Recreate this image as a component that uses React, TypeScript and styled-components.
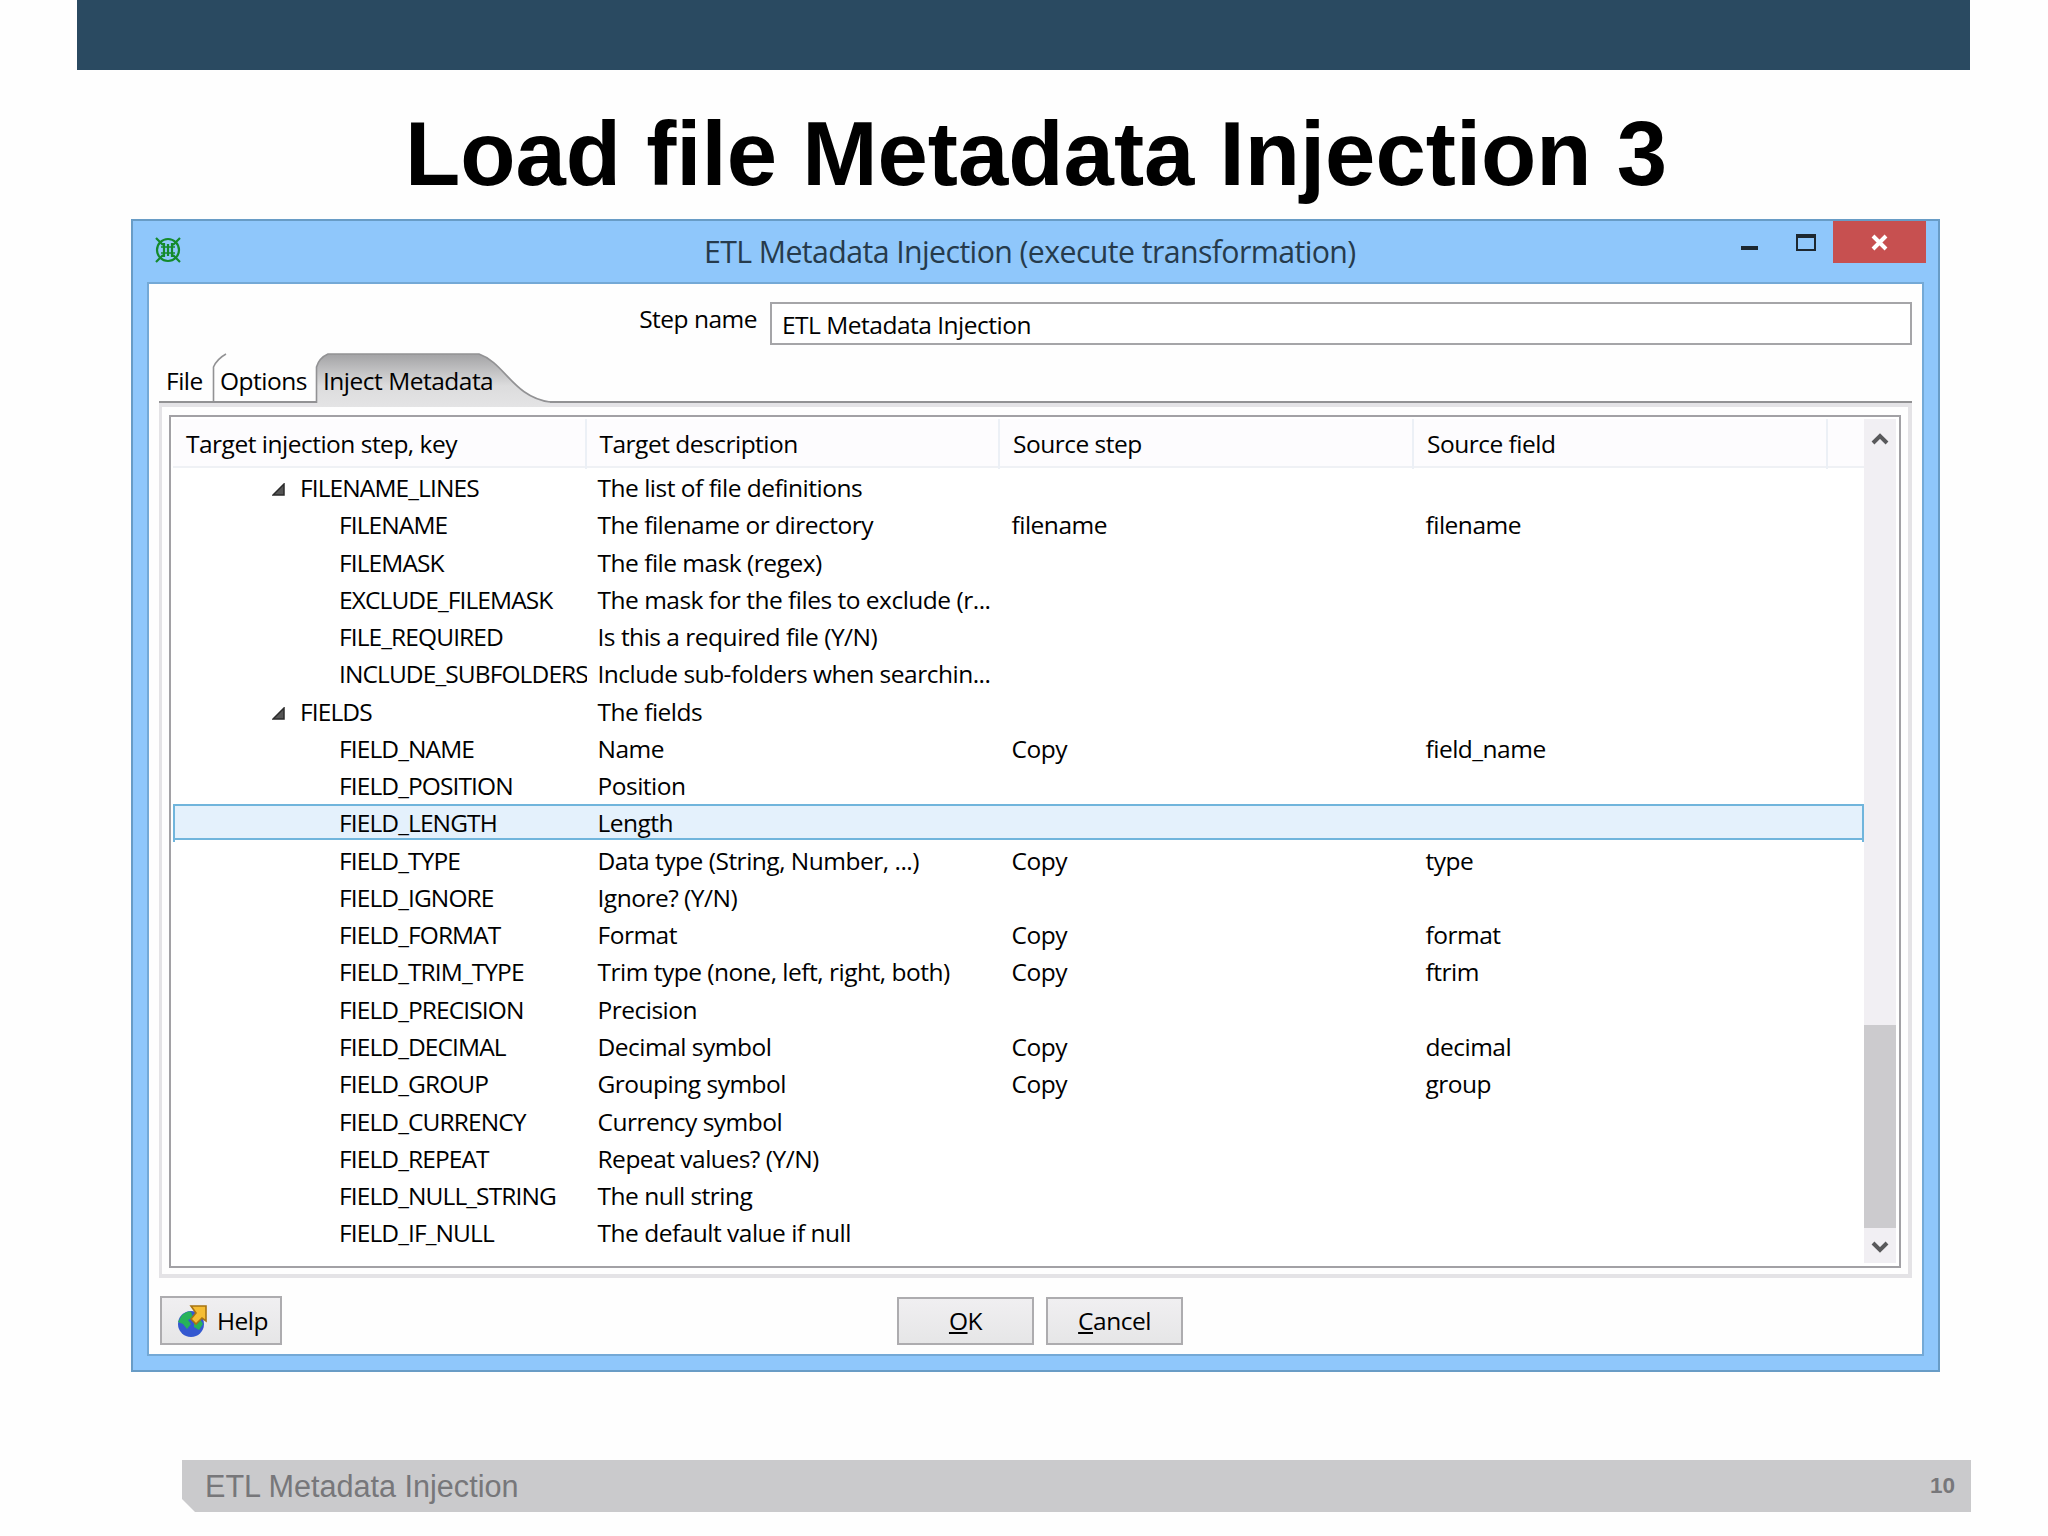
import React from 'react';
import styled, { createGlobalStyle } from 'styled-components';

const Global = createGlobalStyle`
  *, *::before, *::after { box-sizing: border-box; }
  html, body { margin: 0; padding: 0; background: #fefefe; }
  body { width: 2048px; height: 1536px; overflow: hidden; }
`;

const Slide = styled.div`
  display: flex;
  flex-direction: column;
  width: 2048px;
  height: 1536px;
  background: #fefefe;
  color: #000;
`;

const TopBand = styled.div`
  flex: none;
  height: 70px;
  margin: 0 78px 0 77px;
  background: #2a4a61;
`;

const SlideTitle = styled.h1`
  flex: none;
  height: 149px;
  margin: 0;
  padding: 33px 0 0 24px;
  font: bold 90.5px/102px "Liberation Sans", Arial, sans-serif;
  text-align: center;
  white-space: nowrap;
`;

const Window = styled.section`
  flex: none;
  display: flex;
  flex-direction: column;
  width: 1809px;
  height: 1153px;
  margin-left: 131px;
  padding: 0 14px 14px;
  border: 2px solid #689cc6;
  background: #8fc7fb;
  font: 24.5px/36px "Open Sans", "Noto Sans", sans-serif;
  white-space: nowrap;
`;

const TitleBar = styled.header`
  flex: none;
  display: flex;
  height: 61px;
  padding-left: 8px;
`;

const AppIcon = styled.svg`
  flex: none;
  width: 26px;
  height: 26px;
  margin-top: 16px;
`;

const Caption = styled.h2`
  flex: 1;
  margin: 0;
  padding-left: 523px;
  font-size: 30.3px;
  font-weight: 400;
  line-height: 61px;
  letter-spacing: -0.6px;
  color: #263b4c;
`;

const WindowControls = styled.svg`
  flex: none;
  width: 193px;
  height: 42px;
  margin-right: -2px;
`;

const Client = styled.div`
  flex: 1;
  display: flex;
  flex-direction: column;
  min-height: 0;
  padding: 18px 10px 0 10px;
  border: 2px solid #74a9d6;
  background: #fefefe;
`;

const NameRow = styled.div`
  flex: none;
  display: flex;
  justify-content: flex-end;
  gap: 13px;
  height: 51px;
`;

const NameLabel = styled.label`
  line-height: 33px;
  letter-spacing: -0.5px;
`;

const NameField = styled.div`
  width: 1142px;
  height: 43px;
  padding: 0 10px;
  border: 2px solid #a5a5a8;
  background: #fff;
  line-height: 41px;
  letter-spacing: -0.5px;
`;

const Tabs = styled.nav`
  flex: none;
  position: relative;
  display: flex;
  height: 50px;
  margin-right: 0;
`;

const TabShapes = styled.svg`
  position: absolute;
  left: 0;
  top: 0;
  width: 400px;
  height: 54px;
`;

const Tab = styled.span<{ $width: number }>`
  position: relative;
  width: ${(p) => p.$width}px;
  padding-left: 7px;
  line-height: 55px;
  letter-spacing: -0.5px;
`;

const TabPane = styled.div`
  flex: none;
  height: 875px;
  margin-right: 0;
  padding: 8px 7px 6px;
  border: solid #e4e3e6;
  border-width: 4px 4px 4px 3px;
  box-shadow: 0 -2px 0 #929294;
`;

const Tree = styled.div`
  display: flex;
  height: 853px;
  padding: 2px 3px 3px 2px;
  border: 2px solid #a2a1a5;
  background: #fff;
`;

const Grid = styled.div`
  flex: 1;
  min-width: 0;
`;

const columns = '413.5px 414px 414px 1fr';

const HeaderRow = styled.div`
  display: grid;
  grid-template-columns: 413.5px 413.5px 414px 414px 1fr;
  height: 49px;
  border-bottom: 2px solid #eff1f5;
  background: #fdfcfe;
`;

const HeaderCell = styled.div`
  padding-left: 13px;
  border-right: 2px solid #ecf0f6;
  line-height: 50px;
  letter-spacing: -0.5px;
  &:last-child { border-right: 0; }
`;

const Rows = styled.div`
  padding-top: 1px;
`;

const Row = styled.div<{ $selected?: boolean }>`
  display: grid;
  grid-template-columns: ${columns};
  height: 37.27px;
  line-height: 37px;
  ${(p) => p.$selected && `
    background: linear-gradient(#70b5dc 0 2px, #e4f1fc 2px 34px, #70b5dc 34px 36px, transparent 36px);
    box-shadow: inset 2px 0 #70b5dc, inset -2px 0 #70b5dc;
  `}
`;

const KeyCell = styled.div<{ $level: number }>`
  display: flex;
  overflow: hidden;
  padding-left: ${(p) => (p.$level === 1 ? 99 : 166)}px;
  letter-spacing: -0.9px;
`;

const Expander = styled.svg`
  flex: none;
  width: 13px;
  height: 13px;
  margin: 14px 15px 0 0;
`;

const Cell = styled.div`
  padding-left: 11px;
  letter-spacing: -0.5px;
`;

const ScrollBar = styled.div`
  flex: none;
  display: flex;
  flex-direction: column;
  justify-content: space-between;
  width: 32px;
  background: #f1eff3;
`;

const Arrow = styled.svg`
  flex: none;
  width: 32px;
  height: 35px;
`;

const Thumb = styled.div`
  height: 203px;
  margin-top: auto;
  background: #cccbce;
`;

const Buttons = styled.footer`
  flex: none;
  display: flex;
  align-items: flex-end;
  height: 67px;
  padding-left: 1px;
`;

const PushButton = styled.button<{ $width: number; $height: number; $gap: number }>`
  display: flex;
  align-items: center;
  justify-content: center;
  width: ${(p) => p.$width}px;
  height: ${(p) => p.$height}px;
  margin: 0 0 0 ${(p) => p.$gap}px;
  padding: 0;
  border: 2px solid #adacaf;
  background: linear-gradient(#f0eff1, #e6e6e7);
  color: #000;
  font: inherit;
  letter-spacing: -0.5px;
`;

const HelpIcon = styled.svg`
  width: 32px;
  height: 34px;
  margin: 0 8px 0 3px;
`;

const Mnemonic = styled.span`
  text-decoration: underline;
  text-decoration-thickness: 2px;
  text-underline-offset: 2px;
`;

const SlideFooter = styled.footer`
  flex: none;
  display: flex;
  justify-content: space-between;
  height: 52px;
  margin: 88px 77px 0 182px;
  padding: 0 16px 0 23px;
  background: #cacacc;
  clip-path: polygon(0 0, 100% 0, 100% 100%, 13px 100%, 0 39px);
  color: #77777a;
  font: 30.6px/52px "Liberation Sans", Arial, sans-serif;
`;

const PageNumber = styled.span`
  font-size: 22.5px;
  font-weight: bold;
`;

type Item = [level: number, key: string, description: string, step?: string, field?: string];

const items: Item[] = [
  [1, 'FILENAME_LINES', 'The list of file definitions'],
  [2, 'FILENAME', 'The filename or directory', 'filename', 'filename'],
  [2, 'FILEMASK', 'The file mask (regex)'],
  [2, 'EXCLUDE_FILEMASK', 'The mask for the files to exclude (r...'],
  [2, 'FILE_REQUIRED', 'Is this a required file (Y/N)'],
  [2, 'INCLUDE_SUBFOLDERS', 'Include sub-folders when searchin...'],
  [1, 'FIELDS', 'The fields'],
  [2, 'FIELD_NAME', 'Name', 'Copy', 'field_name'],
  [2, 'FIELD_POSITION', 'Position'],
  [2, 'FIELD_LENGTH', 'Length'],
  [2, 'FIELD_TYPE', 'Data type (String, Number, ...)', 'Copy', 'type'],
  [2, 'FIELD_IGNORE', 'Ignore? (Y/N)'],
  [2, 'FIELD_FORMAT', 'Format', 'Copy', 'format'],
  [2, 'FIELD_TRIM_TYPE', 'Trim type (none, left, right, both)', 'Copy', 'ftrim'],
  [2, 'FIELD_PRECISION', 'Precision'],
  [2, 'FIELD_DECIMAL', 'Decimal symbol', 'Copy', 'decimal'],
  [2, 'FIELD_GROUP', 'Grouping symbol', 'Copy', 'group'],
  [2, 'FIELD_CURRENCY', 'Currency symbol'],
  [2, 'FIELD_REPEAT', 'Repeat values? (Y/N)'],
  [2, 'FIELD_NULL_STRING', 'The null string'],
  [2, 'FIELD_IF_NULL', 'The default value if null'],
];

export default function App() {
  return (
    <Slide>
      <Global />
      <TopBand />
      <SlideTitle>Load file Metadata Injection 3</SlideTitle>
      <Window>
        <TitleBar>
          <AppIcon viewBox="0 0 26 26" fill="none" stroke="#148a2c" strokeWidth="2.2">
            <circle cx="13" cy="13" r="11" />
            <path d="M1 1l7 7M25 1l-7 7M1 25l7-7M25 25l-7-7M9 6v14M17 6v14M13 7v12" />
            <path d="M6 10h14M6 16h14" strokeWidth="1.6" />
          </AppIcon>
          <Caption>ETL Metadata Injection (execute transformation)</Caption>
          <WindowControls viewBox="0 0 193 42">
            <rect x="8" y="25" width="17" height="4" fill="#1d2830" />
            <path d="M64 15h18v14H64z" fill="none" stroke="#1d2830" strokeWidth="2" />
            <path d="M63 13h20v4H63z" fill="#1d2830" />
            <rect x="100" y="0" width="93" height="42" fill="#c75050" />
            <path d="M140 15l13 13M153 15l-13 13" stroke="#fff" strokeWidth="4" />
          </WindowControls>
        </TitleBar>
        <Client>
          <NameRow>
            <NameLabel>Step name</NameLabel>
            <NameField>ETL Metadata Injection</NameField>
          </NameRow>
          <Tabs>
            <TabShapes viewBox="0 0 400 54">
              <defs>
                <linearGradient id="tab" x1="0" y1="0" x2="0" y2="1">
                  <stop offset="0" stopColor="#a3a3a5" />
                  <stop offset="0.6" stopColor="#dcdcdd" />
                  <stop offset="1" stopColor="#e4e4e5" />
                </linearGradient>
              </defs>
              <path d="M54.500 50V14Q58 6 67 1" fill="none" stroke="#929294" strokeWidth="1.600" />
              <path d="M157.500 54V14Q160 5 169 1H320C346 10 354 44 391 49V54z" fill="url(#tab)" />
              <path d="M157.500 50V14Q160 5 169 1H320C346 10 354 44 391 49" fill="none" stroke="#929294" strokeWidth="1.600" />
            </TabShapes>
            <Tab $width={54}>File</Tab>
            <Tab $width={103}>Options</Tab>
            <Tab $width={200}>Inject Metadata</Tab>
          </Tabs>
          <TabPane>
            <Tree>
              <Grid>
                <HeaderRow>
                  <HeaderCell>Target injection step, key</HeaderCell>
                  <HeaderCell>Target description</HeaderCell>
                  <HeaderCell>Source step</HeaderCell>
                  <HeaderCell>Source field</HeaderCell>
                  <HeaderCell />
                </HeaderRow>
                <Rows>
                  {items.map(([level, key, description, step, field]) => (
                    <Row key={key} $selected={key === 'FIELD_LENGTH'}>
                      <KeyCell $level={level}>
                        {level === 1 && (
                          <Expander viewBox="0 0 13 13">
                            <path d="M12 1v11H1z" fill="#555" stroke="#2b2b2b" strokeWidth="1.500" />
                          </Expander>
                        )}
                        {key}
                      </KeyCell>
                      <Cell>{description}</Cell>
                      <Cell>{step}</Cell>
                      <Cell>{field}</Cell>
                    </Row>
                  ))}
                </Rows>
              </Grid>
              <ScrollBar>
                <Arrow viewBox="0 0 32 35" fill="none" stroke="#59595b" strokeWidth="4">
                  <path d="M9 24l7-7 7 7" />
                </Arrow>
                <Thumb />
                <Arrow viewBox="0 0 32 35" fill="none" stroke="#59595b" strokeWidth="4">
                  <path d="M9 15l7 7 7-7" />
                </Arrow>
              </ScrollBar>
            </Tree>
          </TabPane>
          <Buttons>
            <PushButton $width={122} $height={49} $gap={0}>
              <HelpIcon viewBox="0 0 32 34">
                <circle cx="14" cy="20" r="13" fill="#3458d0" />
                <path d="M5 11q6-5 9-3l2 5-5 3 3 4-4 5-4-5-5-2zM17 18l6-3 3 5-4 6-5-3z" fill="#27b35a" />
                <path d="M14 2h15v15l-4-3-6 6-5-5 5-6z" fill="#f5bd33" stroke="#a87412" strokeWidth="1.600" />
              </HelpIcon>
              Help
            </PushButton>
            <PushButton $width={137} $height={48} $gap={615}>
              <Mnemonic>O</Mnemonic>K
            </PushButton>
            <PushButton $width={137} $height={48} $gap={12}>
              <Mnemonic>C</Mnemonic>ancel
            </PushButton>
          </Buttons>
        </Client>
      </Window>
      <SlideFooter>
        <span>ETL Metadata Injection</span>
        <PageNumber>10</PageNumber>
      </SlideFooter>
    </Slide>
  );
}
